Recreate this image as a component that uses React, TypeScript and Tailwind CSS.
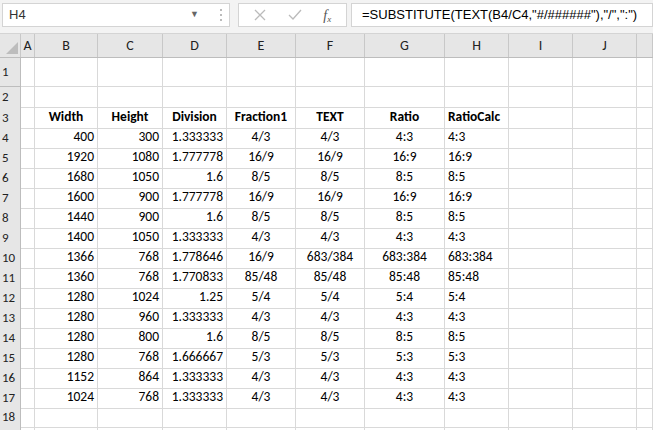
import React from "react";

const rows: string[][] = [
  ["400","300","1.333333","4/3","4/3","4:3","4:3"],
  ["1920","1080","1.777778","16/9","16/9","16:9","16:9"],
  ["1680","1050","1.6","8/5","8/5","8:5","8:5"],
  ["1600","900","1.777778","16/9","16/9","16:9","16:9"],
  ["1440","900","1.6","8/5","8/5","8:5","8:5"],
  ["1400","1050","1.333333","4/3","4/3","4:3","4:3"],
  ["1366","768","1.778646","16/9","683/384","683:384","683:384"],
  ["1360","768","1.770833","85/48","85/48","85:48","85:48"],
  ["1280","1024","1.25","5/4","5/4","5:4","5:4"],
  ["1280","960","1.333333","4/3","4/3","4:3","4:3"],
  ["1280","800","1.6","8/5","8/5","8:5","8:5"],
  ["1280","768","1.666667","5/3","5/3","5:3","5:3"],
  ["1152","864","1.333333","4/3","4/3","4:3","4:3"],
  ["1024","768","1.333333","4/3","4/3","4:3","4:3"],
];
const cols = "grid grid-cols-[21px_14px_63px_65px_64px_69px_69px_80px_64px_64px_64px_1fr]";
const letters = ["A","B","C","D","E","F","G","H","I","J",""];
const align = ["text-right","text-right","text-right","text-center","text-center","text-center","text-left"];

function Row({ n, cells, h, bold }: { n: string; cells: string[]; h: string; bold?: boolean }) {
  return (
    <div className={`${cols} ${h}`}>
      <div className="bg-[#e6e6e6] border-r border-b border-[#bdbdbd] flex items-center pl-[2px] text-[13px] text-[#222]">{n}</div>
      <div className="border-r border-b border-[#d9d9d9]" />
      {Array.from({ length: 10 }).map((_, i) => {
        const v = i < 7 ? cells[i] ?? "" : "";
        const al = i < 7 ? (bold ? (i === 6 ? "text-left" : "text-center") : align[i]) : "";
        return (
          <div key={i} className={`border-r border-b border-[#d9d9d9] flex items-end pb-[1px] px-[3px] text-[13.5px] text-black ${bold ? "font-bold" : ""}`}>
            <span className={`w-full whitespace-nowrap ${al}`}>{v}</span>
          </div>
        );
      })}
    </div>
  );
}

export default function App() {
  return (
    <div className="w-[653px] h-[430px] overflow-hidden bg-white" style={{ fontFamily: "Calibri, Carlito, 'Open Sans', 'Liberation Sans', sans-serif" }}>
      <div className="h-[34px] bg-[#f3f3f3] flex items-start pt-[3px] border-b border-[#d4d4d4]" style={{ fontFamily: "'Liberation Sans', sans-serif" }}>
        <div className="ml-[2px] w-[228px] h-[24px] bg-white border border-[#d4d4d4] flex items-center px-[6px] text-[13px] text-[#333] justify-between">
          <span>H4</span>
          <span className="text-[9px] text-[#666] mr-[24px]">▼</span>
        </div>
        <div className="w-[6px] h-[24px] flex flex-col items-center justify-center gap-[3px] ml-[-12px] mr-[14px]">
          <span className="w-[2px] h-[2px] bg-[#bbb]" /><span className="w-[2px] h-[2px] bg-[#bbb]" /><span className="w-[2px] h-[2px] bg-[#bbb]" />
        </div>
        <div className="w-[109px] h-[24px] bg-white border border-[#d4d4d4] flex items-center justify-around px-[4px]">
          <svg width="12" height="12" viewBox="0 0 12 12"><path d="M1 1L11 11M11 1L1 11" stroke="#bbb" strokeWidth="1.3" /></svg>
          <svg width="14" height="12" viewBox="0 0 14 12"><path d="M1 6L5 10L13 1" stroke="#bbb" strokeWidth="1.3" fill="none" /></svg>
          <span className="italic text-[14px] text-[#555]" style={{ fontFamily: "'Liberation Serif', serif" }}>f<sub className="text-[9px]">x</sub></span>
        </div>
        <div className="ml-[4px] flex-1 h-[24px] bg-white border border-[#d4d4d4] flex items-center pl-[10px] text-[13px] text-black whitespace-nowrap overflow-hidden">
          =SUBSTITUTE(TEXT(B4/C4,"#/######"),"/",":")
        </div>
      </div>
      <div className={`${cols} h-[24px] bg-[#e6e6e6] border-b border-[#bdbdbd] text-[14px] text-[#222]`}>
        <div className="border-r border-[#c8c8c8] relative">
          <svg className="absolute right-[2px] bottom-[3px]" width="12" height="12" viewBox="0 0 12 12"><path d="M12 0V12H0Z" fill="#bdbdbd" /></svg>
        </div>
        {letters.map((l, i) => (
          <div key={i} className="border-r border-[#c8c8c8] flex items-center justify-center">{l}</div>
        ))}
      </div>
      <Row n="1" cells={[]} h="h-[29px]" />
      <Row n="2" cells={[]} h="h-[20px]" />
      <Row n="3" cells={["Width","Height","Division","Fraction1","TEXT","Ratio","RatioCalc"]} h="h-[20px]" bold />
      {rows.map((r, i) => <Row key={i} n={String(i + 4)} cells={r} h="h-[20px]" />)}
      <Row n="18" cells={[]} h="h-[20px]" />
      <Row n="" cells={[]} h="h-[20px]" />
    </div>
  );
}
